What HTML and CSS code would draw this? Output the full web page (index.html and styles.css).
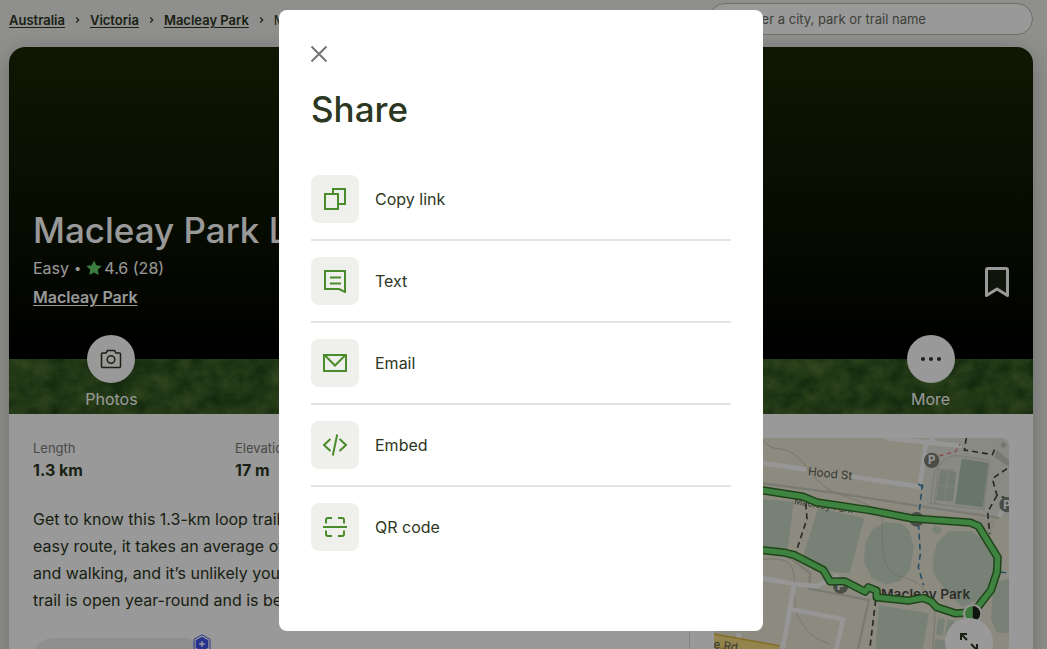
FILE: index.html
```html
<!DOCTYPE html>
<html lang="en">
<head>
  <meta charset="UTF-8" />
  <meta name="viewport" content="width=device-width, initial-scale=1.0"/>
  <title>Macleay Park Loop</title>
  <link rel="stylesheet" href="styles.css">
</head>
<body>

  <div class="page">
    <header class="topbar">
      <nav class="breadcrumbs" aria-label="Breadcrumb">
        <a href="#">Australia</a>
        <svg class="chevron" viewBox="0 0 6 8"><path d="M1.5 1l3 3-3 3"/></svg>
        <a href="#">Victoria</a>
        <svg class="chevron" viewBox="0 0 6 8"><path d="M1.5 1l3 3-3 3"/></svg>
        <a href="#">Macleay Park</a>
        <svg class="chevron" viewBox="0 0 6 8"><path d="M1.5 1l3 3-3 3"/></svg>
        <span>Macleay Park Loop</span>
      </nav>
      <input class="search" type="text" aria-label="Search" placeholder="Enter a city, park or trail name">
    </header>

    <main class="trail">
      <section class="hero">
        <div>
          <h1>Macleay Park Loop</h1>
          <p class="rating">
            <span>Easy</span>
            <span class="dot">•</span>
            <svg class="star" viewBox="0 0 16 16"><path d="M8 .5l2.300 4.800 5.300.7-3.900 3.700 1 5.300L8 12.400 3.300 15l1-5.300L.4 6l5.300-.7z"/></svg>
            <span>4.6 (28)</span>
          </p>
          <a class="park" href="#">Macleay Park</a>
        </div>
        <button class="bookmark" aria-label="Save">
          <svg viewBox="0 0 24 30"><path d="M3 1.500h18q1.500 0 1.500 1.500v25.500L12 22 1.500 28.500V3Q1.500 1.500 3 1.500z"/></svg>
        </button>
      </section>

      <section class="strip">
        <svg class="texture">
          <filter id="grass" x="0" y="0" width="100%" height="100%" color-interpolation-filters="sRGB">
            <feTurbulence type="fractalNoise" baseFrequency="0.05 0.06" numOctaves="6" seed="8"/>
            <feColorMatrix values="0.28 0 0 0 0.08  0.28 0 0 0 0.22  0.16 0 0 0 0.06  0 0 0 0 1"/>
          </filter>
          <rect width="100%" height="100%" filter="url(#grass)"/>
        </svg>
        <div class="actions">
          <button class="action">
            <span class="circle">
              <svg viewBox="0 0 24 24"><path d="M3.500 6H7l1.500-2.500h7L17 6h3.500q1 0 1 1v12.500q0 1-1 1h-17q-1 0-1-1V7q0-1 1-1z"/><circle cx="12" cy="12.500" r="3.800"/></svg>
            </span>
            Photos
          </button>
          <button class="action">
            <span class="circle"><svg viewBox="0 0 24 24"><path d="M5 20V9h13M14 5l4 4-4 4"/></svg></span>
            Directions
          </button>
          <button class="action">
            <span class="circle"><svg viewBox="0 0 24 24"><path d="M3 6l6-2 6 2 6-2v14l-6 2-6-2-6 2z"/></svg></span>
            Print/PDF
          </button>
          <button class="action">
            <span class="circle"><svg viewBox="0 0 24 24"><path d="M12 16V3M7 8l5-5 5 5M4 13v8h16v-8"/></svg></span>
            Share
          </button>
          <button class="action">
            <span class="circle">
              <svg class="dots" viewBox="0 0 24 24"><circle cx="4" cy="12" r="2"/><circle cx="12" cy="12" r="2"/><circle cx="20" cy="12" r="2"/></svg>
            </span>
            More
          </button>
        </div>
      </section>

      <div class="content">
        <section class="about">
          <dl class="stats">
            <div><dt>Length</dt><dd>1.3 km</dd></div>
            <div><dt>Elevation gain</dt><dd>17 m</dd></div>
            <div><dt>Route type</dt><dd>Loop</dd></div>
          </dl>
          <p class="description">
            Get to know this 1.3-km loop trail near Melbourne, Victoria. An<br>
            easy route, it takes an average of 15 min to complete. Good for running<br>
            and walking, and it’s unlikely you’ll encounter many other people. The<br>
            trail is open year-round and is beautiful to visit anytime.
          </p>
          <button class="preview" aria-label="Preview trail">
            <svg class="badge" viewBox="0 0 18 20"><path class="rim" d="M9 .7l8 4.600v9.400l-8 4.600-8-4.600V5.300z"/><path class="fill" d="M9 2.700l6.300 3.600v7.400L9 17.300l-6.300-3.600V6.300z"/><path class="plus" d="M9 7.200v5.600M6.200 10h5.600"/></svg>
          </button>
        </section>

        <aside class="sidebar">
          <div class="map">
            <svg class="map-art" viewBox="87 54 885 885">
              <rect class="land" x="87" y="54" width="885" height="885"/>
              <path class="lawn" d="M730 54h242v240l-260-24z"/>
              <path class="block" d="M234 210l480 70 220 20-20 60-30-50-180-16-490-80z"/>

              <path class="field" d="M200 234l126 12-18 140-108-8z"/>
              <path class="field" d="M398 264l140 30-44 166-30-2-30-4-22-12-60-26 38-122z"/>
              <path class="field" d="M560 330l40-24 50 6 24 20 12 50-10 66-30 34-46 12-40-20-24-50 6-54z"/>
              <path class="field" d="M790 334l70 0 40 30 30 56-10 70-40 50-50 20-50-50-34-50-2-50 14-44z"/>
              <path class="field" d="M582 556l150 24-36 200-130-20z"/>
              <path class="field" d="M924 490l60-18v170l-50-6-16-40z"/>
              <path class="field" d="M750 316l22 12-14 16-18-14z"/>
              <path class="field" d="M760 594l20 4-6 50-22-4zM788 598l20 4-6 50-22-4zM750 656l34 6-4 60-36-6z"/>
              <path class="court" d="M830 116l80 12-16 134-84-10z"/>
              <path class="court light" d="M766 150l48 6-10 90-52-6z"/>
              <path class="court-line" d="M790 150l-12 96M760 196l50 6"/>
              <path class="path-outline" d="M914 122L896 268l-160-18 12-90q20-46 64-54zM758 250l-10-2 12-100 50 4"/>
              <path class="building" d="M936 90l36 30v20l-44-28zM952 64l14 8-8 14-12-8z"/>

              <path class="contour" d="M234 62c20 20 30 24 60 26 60 10 80 90 140 122 60 30 120 34 156 76 6 60-10 160 50 182 60 10 110 50 110 130l-10 120M234 418c60-4 90 0 94 60 4 40-6 90 16 120 30 50 50 60 90 74"/>
              <path class="service" d="M234 190l210 28 270 42 230 34M300 400l76 60-4 46 180 34-36 160"/>
              <path class="road" d="M234 130l130 18M500 170l204 30 20-136M600 54l230 24M724 70l24-14M234 476l94 16-36 200M328 492l66 6 66-30M318 568l156 30-22 100M162 640l-6 60M940 290l26-34"/>
              <path class="highway-edge" d="M80 660l200 36"/>
              <path class="highway" d="M80 660l200 36"/>

              <path class="trail-dash" d="M362 250l4 46-34 104M572 540l-18 150M844 54l-6 36 84 14 12-26M966 146l-44 30 14 50 26 8M936 226l-28 50 6 66"/>
              <path class="red-dash" d="M762 108l50-14 14-22"/>
              <path class="blue-dash" d="M712 192l-12 110 6 100-6 40 16 54M700 192l16 10M946 456l30 4"/>

              <g class="parking">
                <circle cx="740" cy="121" r="23"/><circle cx="966" cy="254" r="23"/><circle cx="695" cy="298" r="22"/><circle cx="467" cy="498" r="23"/>
                <text x="740" y="133">P</text><text x="966" y="266">P</text><text x="467" y="510">P</text>
              </g>
              <text class="street" x="368" y="166" transform="rotate(6 368 166)">Hood St</text>
              <text class="street" x="84" y="684" transform="rotate(8 84 684)">e Rd</text>
              <text class="path-name" x="326" y="252" transform="rotate(9 326 252)">Macleay Park</text>
              <text class="park-name" x="588" y="538">Macleay Park</text>

              <path class="route-edge" d="M220 209L354 230 395 247 550 270 680 295 856 308 880 318 938 412 936 456 918 510 866 577 810 580 755 562 740 545 715 534 670 542 575 532 575 512 550 502 540 515 480 484 435 484 415 450 330 406 300 398 220 389"/>
              <path class="route" d="M220 209L354 230 395 247 550 270 680 295 856 308 880 318 938 412 936 456 918 510 866 577 810 580 755 562 740 545 715 534 670 542 575 532 575 512 550 502 540 515 480 484 435 484 415 450 330 406 300 398 220 389"/>
              <circle class="start" cx="863" cy="581" r="29"/>
              <path class="start-green" d="M863 558a23 23 0 0 0 0 46z"/>
              <path class="start-dark" d="M863 558a23 23 0 0 1 0 46z"/>
            </svg>
            <button class="expand" aria-label="Expand map">
              <svg viewBox="0 0 24 24"><path d="M10 10L4 4M4 10V4h6M14 14l6 6M20 14v6h-6"/></svg>
            </button>
          </div>
        </aside>
      </div>
    </main>
  </div>

  <div class="overlay">
    <div class="modal" role="dialog" aria-labelledby="shareTitle">
      <button class="close" aria-label="Close">
        <svg viewBox="0 0 16 16"><path d="M.5.5l15 15M15.500.5l-15 15"/></svg>
      </button>
      <h2 id="shareTitle">Share</h2>
      <div class="share-list">
        <button class="share-item">
          <span class="tile"><svg viewBox="0 0 24 24"><path d="M2 7h13v15H2zM10 7V2h12v15h-7"/></svg></span>
          Copy link
        </button>
        <button class="share-item">
          <span class="tile"><svg viewBox="0 0 24 24"><path d="M2 2h20v21l-6-3H2zM7 8.500h11M7 14.500h11"/></svg></span>
          Text
        </button>
        <button class="share-item">
          <span class="tile"><svg viewBox="0 0 24 24"><path d="M1 4h22v16H1zM2 4.500l10 10 10-10"/></svg></span>
          Email
        </button>
        <button class="share-item">
          <span class="tile"><svg viewBox="0 0 24 24"><path d="M7.500 6L1 12l6.500 6M16.500 6l6.500 6-6.500 6M14.200 1.500L9.800 22.500"/></svg></span>
          Embed
        </button>
        <button class="share-item">
          <span class="tile"><svg viewBox="0 0 24 24"><path d="M0 12h24M3 8.500V5q0-2 2-2h4M15 3h4q2 0 2 2v3.500M21 15.500V19q0 2-2 2h-4M9 21H5q-2 0-2-2v-3.500"/></svg></span>
          QR code
        </button>
      </div>
    </div>
  </div>

</body>
</html>
```

FILE: styles.css
```css
* {
  box-sizing: border-box;
}

body {
  margin: 0;
  padding-right: 5px;
  height: 100vh;
  overflow: hidden;
  background: #efefec;
  color: #2c3722;
  font-family: Inter, "Liberation Sans", sans-serif;
  font-size: 16px;
}

h1, h2, p, dl, dd {
  margin: 0;
}

button {
  padding: 0;
  border: none;
  background: none;
  color: inherit;
  font: inherit;
  cursor: pointer;
}

svg {
  display: block;
  fill: none;
  stroke: currentColor;
  stroke-width: 2;
}

.page {
  padding: 3px 9px 0;
}

/* top bar */
.topbar {
  display: flex;
  justify-content: space-between;
  align-items: center;
  margin-bottom: 12px;
}

.breadcrumbs {
  display: flex;
  align-items: center;
  gap: 10px;
  padding-top: 2px;
  font-size: 13px;
}

.breadcrumbs a {
  color: inherit;
  font-weight: 600;
  text-underline-offset: 2px;
}

.chevron {
  width: 5px;
  height: 8px;
  stroke-width: 1.4;
}

.search {
  width: 324px;
  height: 32px;
  padding: 0 16px 0 32px;
  border: 1px solid #b5b8a8;
  border-radius: 16px;
  background: #fff;
  font: inherit;
  font-size: 13px;
}

.search::placeholder {
  color: #656b5e;
}

/* trail card */
.trail {
  overflow: hidden;
  border-radius: 16px 16px 0 0;
  background: #fff;
  box-shadow: 0 6px 24px rgba(0, 0, 0, 0.25);
}

.hero {
  display: flex;
  justify-content: space-between;
  align-items: flex-end;
  height: 312px;
  padding: 0 24px 50px;
  background: linear-gradient(#1a2705, #0b1303 60%, #000);
  color: #fff;
}

.hero h1 {
  font-size: 35px;
  font-weight: 500;
  line-height: 44px;
}

.rating {
  display: flex;
  align-items: center;
  margin-top: 4px;
  line-height: 24px;
}

.dot {
  margin: 0 5px;
  font-size: 13px;
}

.star {
  width: 16px;
  height: 16px;
  margin-right: 2px;
  fill: #64d26c;
  stroke: none;
}

.park {
  display: inline-block;
  margin-top: 5px;
  color: inherit;
  font-weight: 600;
  line-height: 24px;
  text-underline-offset: 2px;
}

.bookmark {
  margin-bottom: 12px;
}

.bookmark svg {
  width: 24px;
  height: 30px;
  fill: #1a2413;
  stroke-linejoin: round;
  stroke-width: 3;
}

.strip {
  display: grid;
  height: 55px;
}

.texture,
.actions {
  grid-area: 1 / 1;
}

.texture {
  width: 100%;
  height: 55px;
  stroke: none;
}

.actions {
  z-index: 1;
  display: grid;
  grid-template-columns: repeat(5, 1fr);
  margin-top: -24px;
}

.action {
  display: flex;
  flex-direction: column;
  align-items: center;
  gap: 4px;
  color: #fff;
  line-height: 24px;
}

.circle {
  display: grid;
  place-items: center;
  width: 48px;
  height: 48px;
  border-radius: 50%;
  background: #fff;
  color: #2c3722;
}

.circle svg {
  width: 24px;
  height: 24px;
  stroke-width: 1.5;
}

.circle .dots {
  fill: currentColor;
  stroke: none;
}

/* content */
.content {
  display: flex;
}

.about {
  flex: 1;
  padding: 24px;
  border-right: 1px solid #d8d8d5;
}

.stats {
  display: grid;
  grid-template-columns: repeat(3, 178px);
  gap: 24px;
}

.stats dt {
  color: #7a7d75;
  font-size: 13px;
  line-height: 20px;
}

.stats dd {
  font-weight: 700;
  line-height: 24px;
}

.description {
  margin: 24px 0;
  line-height: 27px;
}

.preview {
  position: relative;
  width: 170px;
  height: 40px;
  border-radius: 20px;
  background: #eeeeee;
}

.badge {
  position: absolute;
  top: -4px;
  right: -8px;
  width: 18px;
  height: 20px;
}

.rim {
  stroke: #4a5df0;
  stroke-width: 1;
}

.fill {
  fill: #4257ee;
  stroke: none;
}

.plus {
  stroke: #fff;
  stroke-width: 1.5;
}

.sidebar {
  width: 343px;
  padding: 24px;
}

.map {
  position: relative;
  overflow: hidden;
  border-radius: 8px;
}

.map-art {
  width: 100%;
}

.expand {
  position: absolute;
  top: 180px;
  right: 16px;
  display: grid;
  place-items: center;
  width: 48px;
  height: 48px;
  border-radius: 50%;
  background: #fff;
}

.expand svg {
  width: 24px;
  height: 24px;
}

/* map drawing */
.map-art text {
  stroke: none;
  fill: #5d6157;
}

.land { fill: #ebe7d6; stroke: none; }
.lawn { fill: #e7e6dc; stroke: none; }
.block { fill: #e2e0cf; stroke: none; }
.field { fill: #c9d8c3; stroke: none; }
.court { fill: #aec5b0; stroke: none; }
.court.light { fill: #becfbd; }
.court-line { stroke: #d8dfcf; stroke-width: 3; }
.building { fill: #c9c9bd; stroke: none; }
.path-outline { stroke: #d0d2c4; stroke-width: 4; }
.contour { stroke: #b9b2a3; stroke-width: 2; }
.service { stroke: #cccdbf; stroke-width: 7; }
.road { stroke: #fbfafb; stroke-width: 14; }
.highway-edge { stroke: #dcb53a; stroke-width: 42; }
.highway { stroke: #f6dc80; stroke-width: 34; }
.trail-dash { stroke: #46463c; stroke-width: 5; stroke-dasharray: 18 12; }
.red-dash { stroke: #e08070; stroke-width: 4; stroke-dasharray: 14 10; }
.blue-dash { stroke: #4387ae; stroke-width: 5; stroke-dasharray: 18 12; }
.parking circle { fill: #7c8177; stroke: none; }

.map-art .parking text {
  fill: #fff;
  font-size: 34px;
  font-weight: 700;
  text-anchor: middle;
}

.street {
  font-size: 35px;
}

.path-name {
  font-size: 28px;
}

.map-art .park-name {
  fill: #4b4f47;
  font-size: 41px;
  font-weight: 600;
}

.route-edge {
  stroke: #35702a;
  stroke-width: 25;
  stroke-linejoin: round;
}

.route {
  stroke: #68dc6c;
  stroke-width: 16;
  stroke-linejoin: round;
}

.start {
  fill: #fff;
  stroke: #c9cbc4;
}

.start-green { fill: #64c95f; stroke: none; }
.start-dark { fill: #1c2616; stroke: none; }

/* share dialog */
.overlay {
  position: fixed;
  inset: 0;
  z-index: 10;
  display: flex;
  justify-content: center;
  align-items: flex-start;
  padding: 10px 5px 0 0;
  background: rgba(0, 0, 0, 0.4);
}

.modal {
  width: 484px;
  padding: 32px 32px 64px;
  border-radius: 8px;
  background: #fff;
}

.close {
  display: flex;
  align-items: center;
  height: 24px;
  color: #757575;
}

.close svg {
  width: 16px;
  height: 16px;
  overflow: visible;
}

.modal h2 {
  margin: 21px 0 28px;
  font-size: 35px;
  font-weight: 500;
  line-height: 44px;
}

.share-item {
  display: flex;
  align-items: center;
  gap: 16px;
  width: 100%;
  padding: 16px 0;
  border-bottom: 2px solid #e3e3e3;
}

.share-item:last-child {
  border-bottom: none;
}

.tile {
  display: grid;
  place-items: center;
  width: 48px;
  height: 48px;
  border-radius: 8px;
  background: #efefec;
  color: #4a8b2c;
}

.tile svg {
  width: 24px;
  height: 24px;
}
```
